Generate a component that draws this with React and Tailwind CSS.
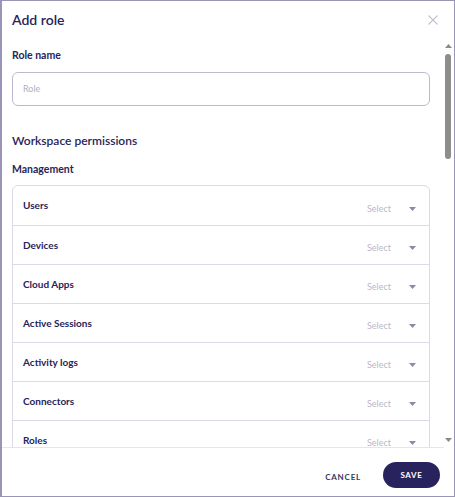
import React from "react";

const rows = ["Users", "Devices", "Cloud Apps", "Active Sessions", "Activity logs", "Connectors", "Roles"];

function Caret({ className = "" }) {
  return (
    <svg width="7" height="4" viewBox="0 0 7 4" className={className}>
      <path d="M0 0 L7 0 L3.5 4 Z" fill="currentColor" />
    </svg>
  );
}

export default function App() {
  return (
    <div
      className="w-[455px] h-[497px] bg-white border border-[#9a94b6] border-l-2 flex flex-col overflow-hidden text-[#28245a]"
      style={{ fontFamily: "Lato, 'Noto Sans', sans-serif" }}
    >
      {/* header */}
      <div className="h-[37px] flex items-center justify-between pl-[10px] pr-[16px] shrink-0">
        <h1 className="text-[14px] font-semibold leading-none mt-[1px]">Add role</h1>
        <svg width="10" height="10" viewBox="0 0 10 10" className="text-[#c3c1cf]">
          <path d="M0.5 0.5 L9.5 9.5 M9.5 0.5 L0.5 9.5" stroke="currentColor" strokeWidth="1.1" />
        </svg>
      </div>

      {/* body */}
      <div className="flex flex-1 min-h-0">
        <div className="flex-1 min-w-0 overflow-hidden pl-[10px] pr-[13px]">
          <div className="h-[16px] mt-[10px] flex items-center text-[10.5px] font-bold">Role name</div>
          <div className="mt-[8px] h-[34px] rounded-[6px] border border-[#bdb9cf] flex items-center pl-[10px]">
            <span className="text-[9px] text-[#b3b0c3]">Role</span>
          </div>
          <div className="h-[16px] mt-[27px] flex items-center text-[12px] font-semibold">Workspace permissions</div>
          <div className="h-[16px] mt-[13px] flex items-center text-[10.5px] font-bold">Management</div>
          <div className="mt-[7px] border border-[#dcdae4] rounded-t-[6px]">
            {rows.map((r, i) => (
              <div
                key={r}
                className={`h-[39px] flex items-center justify-between pl-[10px] pr-[13px] ${i > 0 ? "border-t border-[#dcdae4]" : ""}`}
              >
                <span className="text-[10px] font-bold">{r}</span>
                <span className="flex items-center gap-[18px] mt-[6px]">
                  <span className="text-[9px] text-[#bab7ca]">Select</span>
                  <Caret className="text-[#8c89a3]" />
                </span>
              </div>
            ))}
          </div>
        </div>
        {/* scrollbar */}
        <div className="w-[10px] shrink-0 flex flex-col items-center pt-[6px] pb-[5px] mr-[1px]">
          <Caret className="text-[#8a8a8a] rotate-180" />
          <div className="w-[6px] h-[105px] rounded-full bg-[#8d8d8d] mt-[6px]" />
          <div className="flex-1" />
          <Caret className="text-[#8a8a8a]" />
        </div>
      </div>

      {/* footer */}
      <div className="h-[49px] shrink-0 border-t border-[#e6e5ec] mr-[10px] flex items-center justify-end gap-[22px] pr-[4px] pt-[6px]">
        <span className="text-[8px] font-bold tracking-[0.1em] text-[#3a3760] mt-[3px]">CANCEL</span>
        <button className="w-[57px] h-[26px] rounded-full bg-[#28235d] text-white text-[8px] font-bold tracking-[0.08em]">
          SAVE
        </button>
      </div>
    </div>
  );
}
